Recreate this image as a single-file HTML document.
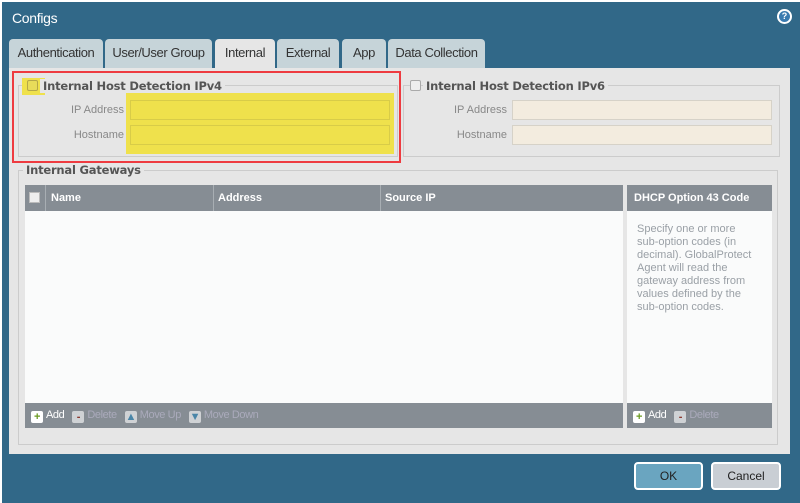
<!DOCTYPE html>
<html><head><style>
*{margin:0;padding:0;box-sizing:border-box}
body{width:800px;height:503px;background:#fff;position:relative;overflow:hidden;font-family:"Liberation Sans",sans-serif}
.a{position:absolute}
.dlg{left:2px;top:2px;width:798px;height:501px;background:#316888}
.tab{position:absolute;top:39px;height:30px;background:#c6d4d9;border-radius:4px 4px 0 0;font-size:13px;color:#333;text-align:center;line-height:28px;letter-spacing:-0.4px}
.lbl{position:absolute;font-size:11px;color:#888;text-align:right;width:90px}
.inp{position:absolute;height:20px;border:1px solid #d6d2c8}
.fs{position:absolute;border:1px solid #ccc}
.leg{position:absolute;font-size:11.5px;font-weight:bold;color:#555;background:#e6e6e6;padding:0 3px;font-family:"DejaVu Sans",sans-serif;letter-spacing:-0.2px}
.cb{position:absolute;width:11px;height:11px;border:1px solid #aaa;background:#eee;border-radius:2px}
.th{position:absolute;top:185px;height:26px;background:#868d94;color:#fff;font-size:11px;font-weight:bold;line-height:26px}
.tb{position:absolute;top:403px;height:25px;background:#868d94;font-size:11px;line-height:25px;color:#aab;letter-spacing:-0.4px}
.ic{display:inline-block;width:12px;height:12px;border-radius:2px;vertical-align:-2px;margin-right:3px;text-align:center;line-height:12px;font-size:11px;font-weight:bold}
</style></head><body>
<div class="a dlg"></div>
<div class="a" style="left:12px;top:10px;color:#fff;font-size:14px;letter-spacing:-0.3px">Configs</div>
<div class="a" style="left:777px;top:9px;width:15px;height:15px;border-radius:50%;background:#fff;"><div style="margin:2px;width:11px;height:11px;border-radius:50%;background:#3a7bb0;color:#fff;font-size:9px;font-weight:bold;text-align:center;line-height:11px">?</div></div>
<div class="tab" style="left:9px;width:94px">Authentication</div>
<div class="tab" style="left:105px;width:107px">User/User Group</div>
<div class="tab" style="left:215px;width:60px;background:#e6e6e6">Internal</div>
<div class="tab" style="left:277px;width:62px">External</div>
<div class="tab" style="left:342px;width:44px">App</div>
<div class="tab" style="left:388px;width:97px">Data Collection</div>
<div class="a" style="left:9px;top:68px;width:781px;height:386px;background:#e6e6e6"></div>

<div class="fs" style="left:18px;top:85px;width:380px;height:72px"></div>
<div class="a" style="left:22px;top:78px;width:23px;height:17px;background:#efe14c"></div>
<div class="cb" style="left:27px;top:80px;background:#e8dc5a;border-color:#b5a84a"></div>
<div class="leg" style="left:40px;top:79px">Internal Host Detection IPv4</div>
<div class="a" style="left:126px;top:93px;width:268px;height:61px;background:#efe14c"></div>
<div class="lbl" style="left:34px;top:104px">IP Address</div>
<div class="lbl" style="left:34px;top:129px">Hostname</div>
<div class="inp" style="left:130px;top:100px;width:260px;background:#efe14c;border-color:#d8cc48"></div>
<div class="inp" style="left:130px;top:125px;width:260px;background:#efe14c;border-color:#d8cc48"></div>
<div class="a" style="left:12px;top:71px;width:389px;height:92px;border:2px solid #ee3b40"></div>

<div class="fs" style="left:403px;top:85px;width:377px;height:72px"></div>
<div class="cb" style="left:410px;top:80px"></div>
<div class="leg" style="left:423px;top:79px">Internal Host Detection IPv6</div>
<div class="lbl" style="left:417px;top:104px">IP Address</div>
<div class="lbl" style="left:417px;top:129px">Hostname</div>
<div class="inp" style="left:512px;top:100px;width:260px;background:#f3ecdf"></div>
<div class="inp" style="left:512px;top:125px;width:260px;background:#f3ecdf"></div>

<div class="fs" style="left:18px;top:170px;width:760px;height:275px"></div>
<div class="leg" style="left:23px;top:163px">Internal Gateways</div>
<div class="a" style="left:25px;top:211px;width:598px;height:192px;background:#fafbfb"></div>
<div class="th" style="left:25px;width:598px"></div>
<div class="a" style="left:29px;top:192px;width:11px;height:11px;background:#eee;border:1px solid #bbb"></div>
<div class="th" style="left:45px;width:168px;border-left:1px solid #a8aeb3;padding-left:5px">Name</div>
<div class="th" style="left:213px;width:167px;border-left:1px solid #a8aeb3;padding-left:4px">Address</div>
<div class="th" style="left:380px;width:243px;border-left:1px solid #a8aeb3;padding-left:4px">Source IP</div>
<div class="tb" style="left:25px;width:598px;padding-left:6px">
<span class="ic" style="background:#fff;color:#6a9a20">+</span><span style="color:#fff">Add</span>&nbsp;&nbsp;
<span class="ic" style="background:#cfd2d5;color:#8c3a30">-</span>Delete&nbsp;&nbsp;
<span class="ic" style="background:#cfd2d5;color:#4a86a8">▲</span>Move Up&nbsp;&nbsp;
<span class="ic" style="background:#cfd2d5;color:#4a86a8">▼</span>Move Down</div>
<div class="a" style="left:627px;top:211px;width:145px;height:192px;background:#fafbfb"></div>
<div class="th" style="left:627px;width:145px;padding-left:7px">DHCP Option 43 Code</div>
<div class="a" style="left:637px;top:223px;width:122px;font-size:11px;line-height:13px;color:#9aa0a6">Specify one or more sub-option codes (in decimal). GlobalProtect Agent will read the gateway address from values defined by the sub-option codes.</div>
<div class="tb" style="left:627px;width:145px;padding-left:6px">
<span class="ic" style="background:#fff;color:#6a9a20">+</span><span style="color:#fff">Add</span>&nbsp;&nbsp;
<span class="ic" style="background:#cfd2d5;color:#8c3a30">-</span>Delete</div>

<div class="a" style="left:634px;top:462px;width:69px;height:28px;background:#6aa5c0;border:2px solid #fff;border-radius:4px;font-size:12px;color:#222;text-align:center;line-height:24px">OK</div>
<div class="a" style="left:711px;top:462px;width:70px;height:28px;background:#c9ced4;border:2px solid #fff;border-radius:4px;font-size:12px;color:#222;text-align:center;line-height:24px">Cancel</div>
</body></html>
